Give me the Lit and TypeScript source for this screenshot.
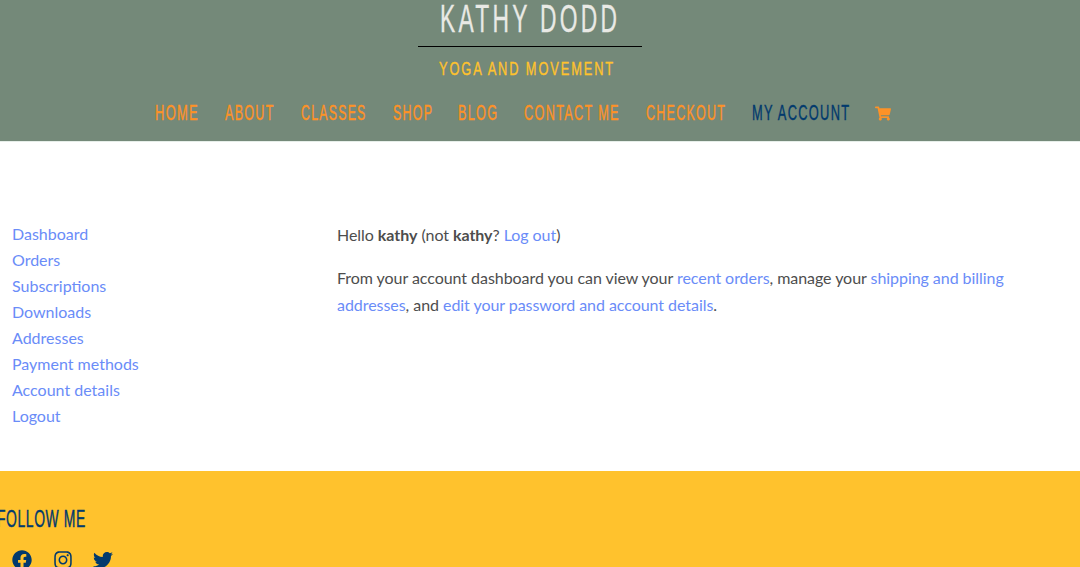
import { LitElement, html, css } from "lit";
import { customElement } from "lit/decorators.js";

// No condensed family is installed, so narrow text is a horizontally scaled face in a box of the reference's width.
const NAV: [string, number, number][] = [
  ["HOME", 43, 0.642],
  ["ABOUT", 49, 0.628],
  ["CLASSES", 65, 0.619],
  ["SHOP", 39, 0.62],
  ["BLOG", 39, 0.63],
  ["CONTACT ME", 95, 0.642],
  ["CHECKOUT", 79, 0.627],
  ["MY ACCOUNT", 97, 0.647],
];
const SIDE = ["Dashboard", "Orders", "Subscriptions", "Downloads", "Addresses", "Payment methods", "Account details", "Logout"];

const narrow = (text: string, width: number, scale: number) =>
  html`<span class="n" style="width:${width}px"><span class="ni" style="transform:scaleX(${scale})">${text}</span></span>`;

/** Scale for the nav once letter-spacing grows by `extra` px over the measured one. */
const rescale = (text: string, width: number, scale: number, extra: number) =>
  width / (width / scale + extra * (text.length - 1));

@customElement("app-root")
export class AppRoot extends LitElement {
  static styles = css`
    :host { display: block; height: 567px; overflow: hidden; font-family: Lato, sans-serif; font-size: 16px; color: #4d4d4d; background: #fff; }
    a { color: #6a8cf8; text-decoration: none; }
    .n { display: block; flex: none; white-space: nowrap; }
    .ni { display: inline-block; transform-origin: 0 50%; }
    header { height: 141px; background: #748979; border-bottom: 1px solid #e6eee9; display: flex; flex-direction: column; align-items: center; font-family: "Liberation Sans", sans-serif; padding-right: 20px; box-sizing: content-box; }
    .title { font-size: 39px; line-height: 38px; letter-spacing: 5.6px; color: #e9e9e5; -webkit-text-stroke: 0.3px #e9e9e5; margin-left: -2px; }
    .rule { width: 224px; height: 1px; background: #000; margin-top: 8px; flex: none; }
    .tag { font-size: 19px; line-height: 22px; letter-spacing: 2.8px; color: #ffc22d; -webkit-text-stroke: 0.4px #ffc22d; margin-top: 11px; margin-left: -6px; }
    nav { display: flex; gap: 26.75px; align-items: center; margin-top: 21px; margin-right: 13.5px; font-size: 21.5px; line-height: 24px; letter-spacing: 2.2px; color: #fd9227; -webkit-text-stroke: 0.4px currentColor; }
    nav .cur { color: #023a6d; }
    nav svg { width: 16px; height: 15px; fill: #fd9227; display: block; flex: none; }
    main { height: 329px; display: flex; padding: 79px 0 0 12px; box-sizing: border-box; }
    .side { width: 325px; display: flex; flex-direction: column; font-size: 16px; line-height: 26px; flex: none; }
    .body { width: 680px; line-height: 27px; letter-spacing: -0.05px; }
    .body p { margin: 0 0 16px; }
    footer { height: 96px; background: #ffc22d; color: #023a6d; padding: 33px 0 0 0; box-sizing: border-box; }
    .fh { font-family: "Liberation Sans", sans-serif; font-size: 24px; line-height: 30px; margin-left: -3px; letter-spacing: 1px; -webkit-text-stroke: 0.4px currentColor; }
    .icons { display: flex; gap: 20.5px; margin: 16px 0 0 12px; }
    .icons svg { width: 20px; height: 20px; fill: #023a6d; display: block; flex: none; }
  `;

  render() {
    return html`
      <header>
        <div class="title">${narrow("KATHY DODD", 178, 0.585)}</div>
        <div class="rule"></div>
        <div class="tag">${narrow("YOGA AND MOVEMENT", 176, 0.675)}</div>
        <nav>
          ${NAV.map(([n, w, s]) => html`<span class=${n === "MY ACCOUNT" ? "cur" : ""}>${narrow(n, w, rescale(n, w, s, 1.0) * 0.977)}</span>`)}
          <svg viewBox="0 0 576 512"><path d="M528 301.3l47.3-208C578.7 78.3 567.3 64 552 64H159.2l-9.2-44.8C147.8 8 137.9 0 126.5 0H24C10.7 0 0 10.7 0 24v16c0 13.3 10.7 24 24 24h69.9l70.2 343.4C147.3 417.1 136 435.2 136 456c0 30.9 25.1 56 56 56s56-25.1 56-56c0-15.7-6.4-29.8-16.8-40h209.6C430.4 426.2 424 440.3 424 456c0 30.9 25.1 56 56 56s56-25.1 56-56c0-22.2-12.9-41.3-31.6-50.4l5.5-24.3c3.4-15-8-29.3-23.4-29.3H218.1l-6.5-32h293c11.2 0 20.9-7.8 23.4-18.7z"/></svg>
        </nav>
      </header>
      <main>
        <div class="side">${SIDE.map((s) => html`<a href="#">${s}</a>`)}</div>
        <div class="body">
          <p>Hello <b>kathy</b> (not <b>kathy</b>? <a href="#">Log out</a>)</p>
          <p>From your account dashboard you can view your <a href="#">recent orders</a>, manage your <a href="#">shipping and billing addresses</a>, and <a href="#">edit your password and account details</a>.</p>
        </div>
      </main>
      <footer>
        <div class="fh">${narrow("FOLLOW ME", 88, 0.58)}</div>
        <div class="icons">
          <svg viewBox="0 0 512 512"><path d="M504 256C504 119 393 8 256 8S8 119 8 256c0 123.780 90.690 226.380 209.250 245V327.690h-63V256h63v-54.640c0-62.150 37-96.480 93.670-96.480 27.140 0 55.520 4.840 55.520 4.840v61h-31.280c-30.800 0-40.410 19.120-40.410 38.730V256h68.780l-11 71.690h-57.780V501C413.310 482.380 504 379.780 504 256z"/></svg>
          <svg viewBox="0 0 448 512"><path d="M224.100 141c-63.600 0-114.900 51.300-114.900 114.900s51.300 114.900 114.900 114.900S339 319.500 339 255.900 287.700 141 224.100 141zm0 189.600c-41.100 0-74.700-33.500-74.700-74.700s33.500-74.700 74.700-74.700 74.700 33.500 74.700 74.700-33.600 74.700-74.700 74.700zm146.400-194.300c0 14.900-12 26.800-26.800 26.800-14.900 0-26.800-12-26.800-26.800s12-26.800 26.800-26.800 26.800 12 26.800 26.800zm76.100 27.200c-1.700-35.900-9.900-67.700-36.200-93.900-26.200-26.200-58-34.400-93.900-36.200-37-2.100-147.900-2.100-184.900 0-35.800 1.700-67.600 9.900-93.900 36.100s-34.400 58-36.200 93.900c-2.100 37-2.100 147.900 0 184.900 1.700 35.900 9.900 67.700 36.200 93.900s58 34.400 93.900 36.200c37 2.100 147.900 2.100 184.900 0 35.900-1.700 67.700-9.900 93.900-36.200 26.200-26.200 34.400-58 36.200-93.900 2.100-37 2.100-147.800 0-184.800zM398.800 388c-7.800 19.600-22.900 34.700-42.600 42.600-29.500 11.700-99.500 9-132.100 9s-102.700 2.600-132.100-9c-19.600-7.800-34.700-22.900-42.600-42.600-11.700-29.500-9-99.500-9-132.100s-2.600-102.700 9-132.100c7.800-19.600 22.900-34.700 42.600-42.600 29.500-11.700 99.500-9 132.100-9s102.700-2.600 132.100 9c19.600 7.800 34.700 22.900 42.600 42.600 11.700 29.500 9 99.500 9 132.100s2.700 102.700-9 132.100z"/></svg>
          <svg viewBox="0 0 512 512"><path d="M459.370 151.716c.325 4.548.325 9.097.325 13.645 0 138.720-105.583 298.558-298.558 298.558-59.452 0-114.680-17.219-161.137-47.106 8.447.974 16.568 1.299 25.340 1.299 49.055 0 94.213-16.568 130.274-44.832-46.132-.975-84.792-31.188-98.112-72.772 6.498.974 12.995 1.624 19.818 1.624 9.421 0 18.843-1.300 27.614-3.573-48.081-9.747-84.143-51.980-84.143-102.985v-1.299c13.969 7.797 30.214 12.670 47.431 13.319-28.264-18.843-46.781-51.005-46.781-87.391 0-19.492 5.197-37.360 14.294-52.954 51.655 63.675 129.300 105.258 216.365 109.807-1.624-7.797-2.599-15.918-2.599-24.040 0-57.828 46.782-104.934 104.934-104.934 30.213 0 57.502 12.670 76.670 33.137 23.715-4.548 46.456-13.320 66.599-25.340-7.798 24.366-24.366 44.833-46.132 57.827 21.117-2.273 41.584-8.122 60.426-16.243-14.292 20.791-32.161 39.308-52.628 54.253z"/></svg>
        </div>
      </footer>
    `;
  }
}
